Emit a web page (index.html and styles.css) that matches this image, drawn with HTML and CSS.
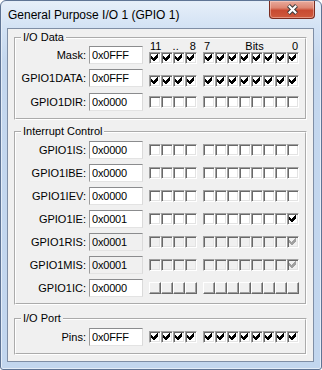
FILE: index.html
```html
<!DOCTYPE html>
<html lang="en">
<head>
    <meta charset="UTF-8">
    <title>General Purpose I/O 1 (GPIO 1)</title>
    <link rel="stylesheet" href="styles.css">
</head>
<body>
    <div class="window">
        <div class="titlebar">
            <span class="title">General Purpose I/O 1 (GPIO 1)</span>
            <div class="close">
                <svg width="13" height="11" viewBox="0 0 13 11">
                    <path d="M2.5 1.5 L10.5 9.5 M10.5 1.5 L2.5 9.5" stroke="#3b3b3b" stroke-width="4.2"/>
                    <path d="M2.8 1.8 L10.2 9.2 M10.2 1.8 L2.8 9.2" stroke="#fff" stroke-width="2.2"/>
                </svg>
            </div>
        </div>

        <div class="client">
            <fieldset class="group group-data">
                <legend>I/O Data</legend>
                <div class="row">
                    <label class="label">Mask:</label>
                    <input class="hex" type="text" value="0x0FFF">
                    <div class="bits-col end-2">
                        <div class="bits-head">
                            <div class="head-a"><span>11</span><span>..</span><span>8</span></div>
                            <div class="head-b"><span>7</span><span class="bits-word">Bits</span><span>0</span></div>
                        </div>
                        <div class="bits" data-value="0x0FFF"></div>
                    </div>
                </div>
                <div class="row tall">
                    <label class="label">GPIO1DATA:</label>
                    <input class="hex" type="text" value="0x0FFF">
                    <div class="bits end-3" data-value="0x0FFF"></div>
                </div>
                <div class="row">
                    <label class="label">GPIO1DIR:</label>
                    <input class="hex" type="text" value="0x0000">
                    <div class="bits" data-value="0x0000"></div>
                </div>
            </fieldset>

            <fieldset class="group group-irq">
                <legend>Interrupt Control</legend>
                <div class="row">
                    <label class="label">GPIO1IS:</label>
                    <input class="hex" type="text" value="0x0000">
                    <div class="bits" data-value="0x0000"></div>
                </div>
                <div class="row">
                    <label class="label">GPIO1IBE:</label>
                    <input class="hex" type="text" value="0x0000">
                    <div class="bits" data-value="0x0000"></div>
                </div>
                <div class="row">
                    <label class="label">GPIO1IEV:</label>
                    <input class="hex" type="text" value="0x0000">
                    <div class="bits" data-value="0x0000"></div>
                </div>
                <div class="row">
                    <label class="label">GPIO1IE:</label>
                    <input class="hex" type="text" value="0x0001">
                    <div class="bits" data-value="0x0001"></div>
                </div>
                <div class="row">
                    <label class="label">GPIO1RIS:</label>
                    <input class="hex" type="text" value="0x0001" disabled>
                    <div class="bits disabled" data-value="0x0001"></div>
                </div>
                <div class="row">
                    <label class="label">GPIO1MIS:</label>
                    <input class="hex" type="text" value="0x0001" disabled>
                    <div class="bits disabled" data-value="0x0001"></div>
                </div>
                <div class="row">
                    <label class="label">GPIO1IC:</label>
                    <input class="hex" type="text" value="0x0000">
                    <div class="bits buttons" data-value="0x0000"></div>
                </div>
            </fieldset>

            <fieldset class="group group-port">
                <legend>I/O Port</legend>
                <div class="row">
                    <label class="label">Pins:</label>
                    <input class="hex" type="text" value="0x0FFF">
                    <div class="bits" data-value="0x0FFF"></div>
                </div>
            </fieldset>
        </div>
    </div>

    <script>
        // check mark drawn pixel by pixel like the classic checkbox
        var CHECK = '<svg viewBox="0 0 7 7" width="7" height="7" shape-rendering="crispEdges">' +
                    '<polygon points="0,2 2,4 6,0 7,0 7,3 3,7 2,7 0,5"/></svg>';

        // build 12 bit boxes (11..8 and 7..0) from each register value
        document.querySelectorAll('.bits').forEach(function(strip) {
            var value = parseInt(strip.dataset.value, 16);
            var html = '';
            [[11, 8], [7, 0]].forEach(function(range) {
                html += '<div class="bit-group">';
                for (var bit = range[0]; bit >= range[1]; bit--) {
                    var on = (value >> bit) & 1;
                    html += '<span class="bit">' + (on ? CHECK : '') + '</span>';
                }
                html += '</div>';
            });
            strip.innerHTML = html;
        });
    </script>
</body>
</html>
```

FILE: styles.css
```css
body {
    margin: 0;
    font-family: "Liberation Sans", Arial, sans-serif;
    font-size: 11px;
    color: #000;
}

.window {
    width: 322px;
    height: 370px;
    box-sizing: border-box;
    border: 1px solid #5f7494;
    border-radius: 6px 6px 3px 3px;
    background: linear-gradient(#e7eff9 0, #d3e2f4 26px, #c4d7ee 60px, #c2d6ee 100%);
    box-shadow: inset 0 0 0 1px #e4edf8;
    display: flex;
    flex-direction: column;
}

.titlebar {
    height: 27px;
    display: flex;
    align-items: flex-start;
    flex-shrink: 0;
}

.title {
    padding-left: 7px;
    padding-top: 1px;
    line-height: 26px;
    font-size: 12px;
}

.close {
    width: 46px;
    height: 18px;
    box-sizing: border-box;
    margin-left: auto;
    margin-right: 6px;
    border: 1px solid #7a2c20;
    border-top: none;
    border-radius: 0 0 4px 4px;
    background: linear-gradient(#e8ab9d 0, #dd8672 40%, #c84a31 55%, #cf5a3d 100%);
    box-shadow: inset 0 0 0 1px rgba(255, 220, 210, 0.45);
    display: flex;
    align-items: center;
    justify-content: center;
}

.close svg {
    display: block;
}

.client {
    flex: 1;
    margin: 0 7px 7px 6px;
    border: 1px solid #7f8ea5;
    background-color: #f0f0f0;
    padding: 0 6px;
}

/* group boxes */
.group {
    margin: 0;
    padding: 0;
    border: 2px groove #fff;
    min-inline-size: 0;
}

.group legend {
    margin-left: 5px;
    padding: 0 2px;
    line-height: 13px;
}

.group-data {
    margin-top: 2px;
    padding-bottom: 5px;
}

.group-data .row:first-of-type {
    margin-top: -1px;
}

.group-irq {
    margin-top: 5px;
    padding-bottom: 4px;
}

.group-port {
    margin-top: 7px;
    padding-bottom: 5px;
}

/* register rows */
.row {
    display: flex;
    align-items: center;
    height: 23px;
}

.row.tall {
    height: 24px;
}

.label {
    width: 70px;
    margin-right: 3px;
    text-align: right;
}

.hex {
    width: 54px;
    height: 18px;
    box-sizing: border-box;
    margin: 0;
    padding: 0 2px;
    border: 1px solid;
    border-color: #8b8c8e #dadada #e3e3e3 #9c9c9c;
    background: #fff;
    font-family: "Liberation Sans", Arial, sans-serif;
    font-size: 11px;
    letter-spacing: -0.2px;
    color: #000;
    outline: none;
}

.hex:disabled {
    background: #f0f0f0;
    color: #000;
    -webkit-text-fill-color: #000;
}

.bits-col {
    margin-left: 6px;
    display: flex;
    flex-direction: column;
}

.bits-col .bits {
    margin-left: 0;
}

.end-2 {
    align-self: flex-end;
    margin-bottom: 2px;
}

.end-3 {
    align-self: flex-end;
    margin-bottom: 3px;
}

.bits-head {
    display: flex;
    gap: 6px;
    line-height: 11px;
}

.head-a {
    width: 48px;
    box-sizing: border-box;
    padding: 0 1px;
    display: flex;
    justify-content: space-between;
}

.head-b {
    width: 96px;
    box-sizing: border-box;
    padding: 0 1px;
    display: flex;
    justify-content: space-between;
}

.bits-word {
    margin-left: 7px;
}

.bits {
    margin-left: 6px;
    display: flex;
    gap: 6px;
}

.bit-group {
    display: flex;
}

.bit {
    width: 12px;
    height: 12px;
    box-sizing: border-box;
    border: 1px solid;
    border-color: #a0a0a0 #fff #fff #a0a0a0;
    box-shadow: inset 1px 1px 0 #696969, inset -1px -1px 0 #e3e3e3;
    background: #fff;
}

.bit svg {
    display: block;
    margin: 1px 0 0 1px;
    fill: #000;
}

.bits.disabled .bit {
    background: #f0f0f0;
}

.bits.disabled .bit svg {
    fill: #a0a0a0;
}

.bits.buttons .bit {
    background: #f0f0f0;
    border-color: #fff #696969 #696969 #fff;
    box-shadow: inset -1px -1px 0 #a0a0a0;
}
```
